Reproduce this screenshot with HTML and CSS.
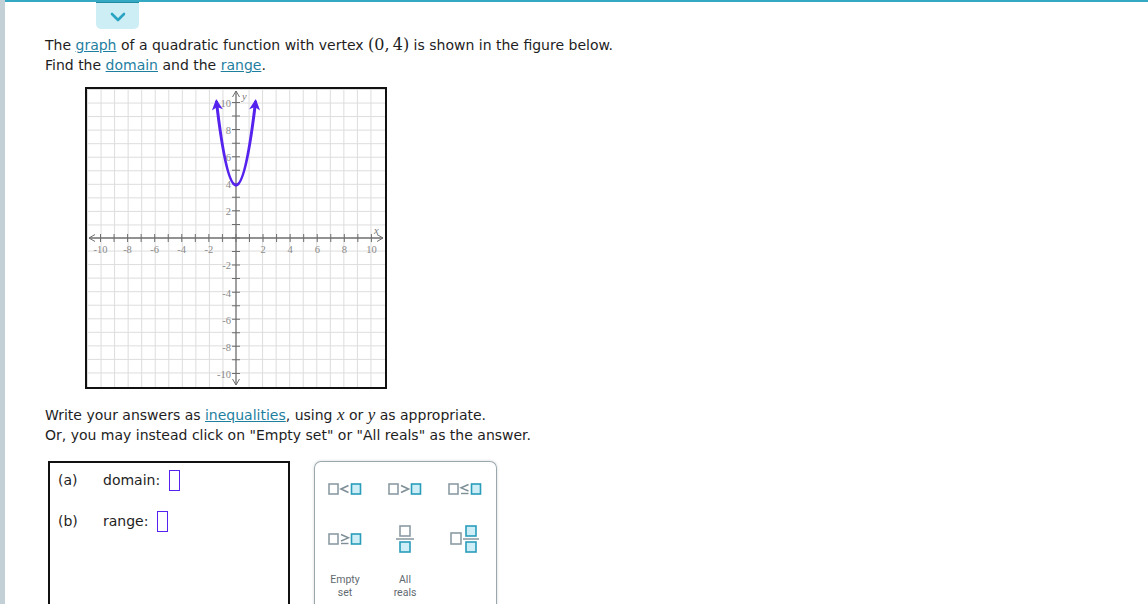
FILE: index.html
```html
<!DOCTYPE html>
<html lang="en">
<head>
<meta charset="utf-8">
<title>Quadratic function domain and range</title>
<link rel="stylesheet" href="styles.css">
</head>
<body>
<div class="page">
  <div class="side-strip"></div>
  <div class="main">
    <div class="topbar">
      <div class="tab">
        <svg width="16" height="10" viewBox="0 0 16 10"><polyline points="2,2 8,8 14,2" fill="none" stroke="#2ba3c3" stroke-width="2.6" stroke-linecap="round" stroke-linejoin="round"/></svg>
      </div>
    </div>
    <div class="content">
      <p class="para">The <a href="#">graph</a> of a quadratic function with vertex <span class="math">(0,&thinsp;4)</span> is shown in the figure below.<br>Find the <a href="#">domain</a> and the <a href="#">range</a>.</p>

      <div class="graph">
        <svg width="298" height="298" viewBox="0 0 298 298">
          <g stroke="#dddddd" stroke-width="1" fill="none">
            <path d="M0.5 0V298M14.05 0V298M27.59 0V298M41.14 0V298M54.68 0V298M68.23 0V298M81.77 0V298M95.32 0V298M108.86 0V298M122.41 0V298M135.95 0V298M162.05 0V298M175.59 0V298M189.14 0V298M202.68 0V298M216.23 0V298M229.77 0V298M243.32 0V298M256.86 0V298M270.41 0V298M283.95 0V298"/>
            <path d="M0 0.5H298M0 14.05H298M0 27.59H298M0 41.14H298M0 54.68H298M0 68.23H298M0 81.77H298M0 95.32H298M0 108.86H298M0 122.41H298M0 135.95H298M0 162.05H298M0 175.59H298M0 189.14H298M0 202.68H298M0 216.23H298M0 229.77H298M0 243.32H298M0 256.86H298M0 270.41H298M0 283.95H298"/>
          </g>
          <g stroke="#6e6e6e" fill="none">
            <line x1="2" y1="149" x2="296" y2="149" stroke-width="1.3"/>
            <line x1="149" y1="2" x2="149" y2="296" stroke-width="1.3"/>
            <line x1="13" y1="149" x2="285.5" y2="149" stroke-width="8" stroke-dasharray="1 12.545"/>
            <line x1="149" y1="13" x2="149" y2="285.5" stroke-width="8" stroke-dasharray="1 12.545"/>
            <polyline points="8,145.5 2,149 8,152.5" stroke-width="1"/>
            <polyline points="290,145.5 296,149 290,152.5" stroke-width="1"/>
            <polyline points="145.5,8 149,2 152.5,8" stroke-width="1"/>
            <polyline points="145.5,290 149,296 152.5,290" stroke-width="1"/>
          </g>
          <g class="ticklbl" text-anchor="middle">
            <text x="13.5" y="164">-10</text>
            <text x="40.5" y="164">-8</text>
            <text x="67.6" y="164">-6</text>
            <text x="94.7" y="164">-4</text>
            <text x="121.8" y="164">-2</text>
            <text x="176.1" y="164">2</text>
            <text x="203.2" y="164">4</text>
            <text x="230.3" y="164">6</text>
            <text x="257.4" y="164">8</text>
            <text x="284.5" y="164">10</text>
          </g>
          <g class="ticklbl" text-anchor="end">
            <text x="144" y="17.8">10</text>
            <text x="144" y="44.9">8</text>
            <text x="144" y="72">6</text>
            <text x="144" y="99.1">4</text>
            <text x="144" y="126.2">2</text>
            <text x="144" y="180.4">-2</text>
            <text x="144" y="207.5">-4</text>
            <text x="144" y="234.6">-6</text>
            <text x="144" y="261.7">-8</text>
            <text x="144" y="288.8">-10</text>
          </g>
          <text class="axlbl" x="155" y="11">y</text>
          <text class="axlbl" x="287" y="145">x</text>
          <defs>
            <marker id="arr" viewBox="-10 -6 12 12" refX="0" refY="0" markerWidth="12" markerHeight="12" markerUnits="userSpaceOnUse" orient="auto-start-reverse">
              <path d="M2 0 L-9 -5.5 L-6 0 L-9 5.5 Z" fill="#5522ee"/>
            </marker>
          </defs>
          <path d="M129.36 12 Q149 180.25 168.64 12" fill="none" stroke="#5522ee" stroke-width="3" marker-start="url(#arr)" marker-end="url(#arr)"/>
        </svg>
      </div>

      <p class="para instr">Write your answers as <a href="#">inequalities</a>, using <i class="mv">x</i> or <i class="mv">y</i> as appropriate.<br>Or, you may instead click on "Empty set" or "All reals" as the answer.</p>

      <div class="answer-row">
        <div class="answer-box">
          <div class="ans-line"><span class="part">(a)</span><span class="lbl">domain:</span><span class="slot"></span></div>
          <div class="ans-line"><span class="part">(b)</span><span class="lbl">range:</span><span class="slot"></span></div>
        </div>
        <div class="keypad">
          <div class="key">
            <svg width="34" height="12" viewBox="0 0 34 12"><rect x="1" y="1" width="9" height="10" fill="#fff" stroke="#8c9ca4" stroke-width="1.6"/><polyline points="20.5,2.5 13,6 20.5,9.5" fill="none" stroke="#7d8e96" stroke-width="1.6"/><rect x="23.5" y="1" width="9" height="10" fill="#cdeef6" stroke="#2a9dbb" stroke-width="1.6"/></svg>
          </div>
          <div class="key">
            <svg width="34" height="12" viewBox="0 0 34 12"><rect x="1" y="1" width="9" height="10" fill="#fff" stroke="#8c9ca4" stroke-width="1.6"/><polyline points="13,2.5 20.5,6 13,9.5" fill="none" stroke="#7d8e96" stroke-width="1.6"/><rect x="23.5" y="1" width="9" height="10" fill="#cdeef6" stroke="#2a9dbb" stroke-width="1.6"/></svg>
          </div>
          <div class="key">
            <svg width="34" height="12" viewBox="0 0 34 12"><rect x="1" y="1" width="9" height="10" fill="#fff" stroke="#8c9ca4" stroke-width="1.6"/><polyline points="20.5,1.5 13,4.8 20.5,8" fill="none" stroke="#7d8e96" stroke-width="1.4"/><line x1="13" y1="10.5" x2="20.5" y2="10.5" stroke="#7d8e96" stroke-width="1.4"/><rect x="23.5" y="1" width="9" height="10" fill="#cdeef6" stroke="#2a9dbb" stroke-width="1.6"/></svg>
          </div>
          <div class="key">
            <svg width="34" height="12" viewBox="0 0 34 12"><rect x="1" y="1" width="9" height="10" fill="#fff" stroke="#8c9ca4" stroke-width="1.6"/><polyline points="13,1.5 20.5,4.8 13,8" fill="none" stroke="#7d8e96" stroke-width="1.4"/><line x1="13" y1="10.5" x2="20.5" y2="10.5" stroke="#7d8e96" stroke-width="1.4"/><rect x="23.5" y="1" width="9" height="10" fill="#cdeef6" stroke="#2a9dbb" stroke-width="1.6"/></svg>
          </div>
          <div class="key">
            <svg width="18" height="28" viewBox="0 0 18 28"><rect x="4" y="1" width="10" height="10" fill="#fff" stroke="#8c9ca4" stroke-width="1.6"/><line x1="0" y1="14" x2="18" y2="14" stroke="#7d8e96" stroke-width="1.4"/><rect x="4" y="17" width="10" height="10" fill="#cdeef6" stroke="#2a9dbb" stroke-width="1.6"/></svg>
          </div>
          <div class="key">
            <svg width="30" height="28" viewBox="0 0 30 28"><rect x="1" y="8" width="10" height="11" fill="#fff" stroke="#8c9ca4" stroke-width="1.6"/><rect x="16" y="1" width="10" height="10" fill="#cdeef6" stroke="#2a9dbb" stroke-width="1.6"/><line x1="13" y1="14" x2="29" y2="14" stroke="#7d8e96" stroke-width="1.4"/><rect x="16" y="17" width="10" height="10" fill="#cdeef6" stroke="#2a9dbb" stroke-width="1.6"/></svg>
          </div>
          <div class="key txt">Empty<br>set</div>
          <div class="key txt">All<br>reals</div>
        </div>
      </div>
    </div>
  </div>
</div>
</body>
</html>
```
FILE: styles.css
```css
* { box-sizing: border-box; }
html, body { margin: 0; padding: 0; background: #fff; }
body {
  font-family: "DejaVu Sans", Verdana, sans-serif;
  color: #1e1e1e;
  overflow: hidden;
}
.page {
  display: flex;
  min-height: 604px;
  height: 604px;
}
.side-strip {
  width: 5px;
  flex: 0 0 5px;
  background: #c3d1d7;
}
.main {
  flex: 1;
  display: flex;
  flex-direction: column;
}
.topbar {
  border-top: 2px solid #35a9c3;
  height: 29px;
  padding-left: 91px;
}
.tab {
  width: 43px;
  height: 27px;
  background: #cdeef4;
  border-top: 1px solid #1f8ba0;
  border-radius: 0 0 5px 5px;
  display: flex;
  align-items: center;
  justify-content: center;
  padding-top: 1px;
}
.content {
  padding-left: 40px;
}
.para {
  margin: 6px 0 0 0;
  font-size: 14px;
  line-height: 20px;
}
.para a {
  color: #1f7f9f;
  text-decoration: underline;
}
.math {
  font-family: "DejaVu Serif", "Liberation Serif", serif;
  font-size: 16px;
}
.mv {
  font-family: "Liberation Serif", "DejaVu Serif", serif;
  font-style: italic;
  font-size: 17px;
}
.graph {
  margin: 12px 0 0 40px;
  width: 302px;
  height: 302px;
  border: 2px solid #111;
}
.graph svg { display: block; }
.ticklbl text {
  font-family: "Liberation Serif", serif;
  font-size: 10.5px;
  fill: #8a8a8a;
}
.axlbl {
  font-family: "Liberation Serif", serif;
  font-style: italic;
  font-size: 10.5px;
  fill: #777;
}
.instr {
  margin-top: 16px;
}
.answer-row {
  display: flex;
  gap: 24px;
  margin: 16px 0 0 3px;
}
.answer-box {
  width: 242px;
  height: 160px;
  border: 2px solid #111;
  border-bottom: none;
  padding: 6px 0 0 8px;
  font-size: 14px;
}
.ans-line {
  display: flex;
  align-items: center;
  height: 22px;
  margin-bottom: 19px;
}
.part { width: 45px; }
.lbl { margin-right: 9px; }
.slot {
  display: inline-block;
  width: 11px;
  height: 21px;
  border: 1.5px solid #5522ee;
}
.keypad {
  width: 183px;
  height: 160px;
  border: 1px solid #9aa8ae;
  border-bottom: none;
  border-radius: 7px 7px 0 0;
  box-shadow: 0 0 3px rgba(0,0,0,0.18);
  display: grid;
  grid-template-columns: 60px 60px 60px;
  grid-template-rows: 50px 50px 40px;
  padding: 1px 0 0 0;
  align-items: center;
  justify-items: center;
}
.key {
  display: flex;
  align-items: center;
  justify-content: center;
  padding-top: 2px;
}
.key.txt {
  font-family: "Roboto", "Liberation Sans", sans-serif;
  font-size: 10.5px;
  line-height: 13px;
  color: #5f6a70;
  text-align: center;
  padding-top: 6px;
}
```
